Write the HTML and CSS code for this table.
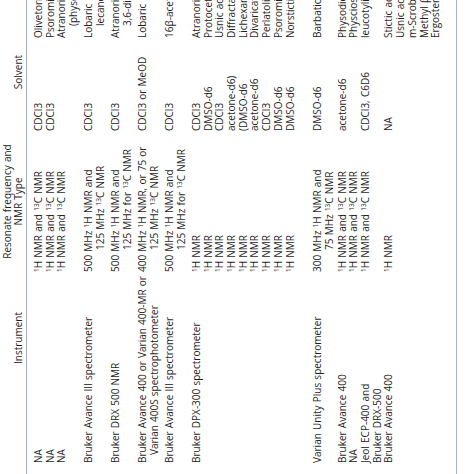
FILE: index.html
```html
<!DOCTYPE html>
<html>
<head>
<meta charset="utf-8">
<link rel="stylesheet" href="styles.css">
</head>
<body>
<div class="stage">
  <div class="rot">
    <table class="tbl">
      <colgroup>
        <col class="w1"><col class="w2"><col class="w3"><col class="w4">
      </colgroup>
      <thead>
        <tr>
          <th class="h1">Instrument</th>
          <th class="h2">Resonate frequency and<br>NMR Type</th>
          <th class="h3">Solvent</th>
          <th class="h4"></th>
        </tr>
      </thead>
      <tbody>
        <tr class="first">
          <td class="c1">NA</td>
          <td><sup>1</sup>H NMR and <sup>13</sup>C NMR</td>
          <td>CDCl3</td>
          <td>Olivetoric acid</td>
        </tr>
        <tr>
          <td class="c1">NA</td>
          <td><sup>1</sup>H NMR and <sup>13</sup>C NMR</td>
          <td>CDCl3</td>
          <td>Psoromic acid</td>
        </tr>
        <tr>
          <td class="c1">NA</td>
          <td><sup>1</sup>H NMR and <sup>13</sup>C NMR</td>
          <td></td>
          <td>Atranorin<span class="ind-c">(physciosin)</span></td>
        </tr>
        <tr class="g">
          <td class="c1">Bruker Avance III spectrometer</td>
          <td>500 MHz <sup>1</sup>H NMR and<span class="ind">125 MHz <sup>13</sup>C NMR</span></td>
          <td>CDCl3</td>
          <td>Lobaric acid,<span class="ind-c">lecanoric acid</span></td>
        </tr>
        <tr class="g">
          <td class="c1">Bruker DRX 500 NMR</td>
          <td>500 MHz <sup>1</sup>H NMR and<span class="ind">125 MHz for <sup>13</sup>C NMR</span></td>
          <td>CDCl3</td>
          <td>Atranorin,<span class="ind-c">3,6-dimethoxy</span></td>
        </tr>
        <tr class="g">
          <td class="c1">Bruker Avance 400 or Varian 400-MR or<span class="ind-s">Varian 400S spectrophotometer</span></td>
          <td>400 MHz <sup>1</sup>H NMR, or 75 or<span class="ind">125 MHz <sup>13</sup>C NMR</span></td>
          <td>CDCl3 or MeOD</td>
          <td>Lobaric acid</td>
        </tr>
        <tr class="g">
          <td class="c1">Bruker Avance III spectrometer</td>
          <td>500 MHz <sup>1</sup>H NMR and<span class="ind">125 MHz for <sup>13</sup>C NMR</span></td>
          <td>CDCl3</td>
          <td>16β-acetoxyhopane</td>
        </tr>
        <tr class="g">
          <td class="c1">Bruker DPX-300 spectrometer</td>
          <td><sup>1</sup>H NMR<br><sup>1</sup>H NMR<br><sup>1</sup>H NMR<br><sup>1</sup>H NMR<br><sup>1</sup>H NMR<br><sup>1</sup>H NMR<br><sup>1</sup>H NMR<br><sup>1</sup>H NMR<br><sup>1</sup>H NMR</td>
          <td>CDCl3<br>DMSO-d6<br>CDCl3<br>acetone-d6)<br>(DMSO-d6<br>acetone-d6<br>CDCl3<br>DMSO-d6<br>DMSO-d6</td>
          <td>Atranorin<br>Protocetraric acid<br>Usnic acid<br>Diffractaic acid<br>Lichexanthone<br>Divaricatic acid<br>Perlatolic acid<br>Psoromic acid<br>Norstictic acid</td>
        </tr>
        <tr class="gb">
          <td class="c1">Varian Unity Plus spectrometer</td>
          <td>300 MHz <sup>1</sup>H NMR and<span class="ind">75 MHz <sup>13</sup>C NMR</span></td>
          <td>DMSO-d6</td>
          <td>Barbatic acid</td>
        </tr>
        <tr class="gs">
          <td class="c1">Bruker Avance 400</td>
          <td><sup>1</sup>H NMR and <sup>13</sup>C NMR</td>
          <td>acetone-d6</td>
          <td>Physodic acid</td>
        </tr>
        <tr>
          <td class="c1">NA</td>
          <td><sup>1</sup>H NMR and <sup>13</sup>C NMR</td>
          <td></td>
          <td>Physciosin</td>
        </tr>
        <tr>
          <td class="c1">Jeol ECP-400 and<br>Bruker DRX-500</td>
          <td><sup>1</sup>H NMR and <sup>13</sup>C NMR</td>
          <td>CDCl3, C6D6</td>
          <td>leucotylin</td>
        </tr>
        <tr class="last">
          <td class="c1">Bruker Avance 400</td>
          <td><sup>1</sup>H NMR</td>
          <td>NA</td>
          <td>Stictic acid<br>Usnic acid<br>m-Scrobiculin<br>Methyl β-orcinolcarboxylate<br>Ergosterol peroxide</td>
        </tr>
      </tbody>
    </table>
  </div>
</div>
</body>
</html>
```

FILE: styles.css
```css
body {
  margin: 0;
  background: #ffffff;
}

.stage {
  width: 474px;
  height: 474px;
  overflow: hidden;
}

.rot {
  width: 474px;
  height: 474px;
  transform: rotate(-90deg);
  transform-origin: 237px 237px;
}

.tbl {
  border-collapse: collapse;
  table-layout: fixed;
  width: 690px;
  font-family: "Open Sans", "Noto Sans", sans-serif;
  font-size: 10px;
  line-height: 11.7px;
  word-spacing: 0.6px;
  color: #1e1e1e;
  border-bottom: 1px solid #a7acd2;
}

.w1 { width: 202px; }
.w2 { width: 141px; }
.w3 { width: 93px; }
.w4 { width: 254px; }

.tbl th {
  font-weight: normal;
  vertical-align: bottom;
  text-align: center;
  padding: 0 0 1px;
  border-bottom: 1px solid #a7acd2;
  height: 25px;
}

.tbl th.h1 {
  padding-left: 70px;
}

.tbl th.h3 {
  padding-left: 25px;
}

.tbl td {
  vertical-align: top;
  text-align: left;
  padding: 0;
  white-space: nowrap;
}

.tbl td.c1 {
  padding-left: 11px;
}

.tbl sup {
  font-size: 6.5px;
  line-height: 0;
  vertical-align: 3.5px;
}

.tbl tr.first td { padding-top: 6px; }
.tbl tr.g td { padding-top: 3.5px; }
.tbl tr.gb td { padding-top: 16px; }
.tbl tr.gs td { padding-top: 1px; }
.tbl tr.last td { padding-bottom: 14px; }

.ind {
  display: block;
  padding-left: 22px;
}

.ind-s {
  display: block;
  padding-left: 8px;
}

.ind-c {
  display: block;
  padding-left: 12px;
}
```
